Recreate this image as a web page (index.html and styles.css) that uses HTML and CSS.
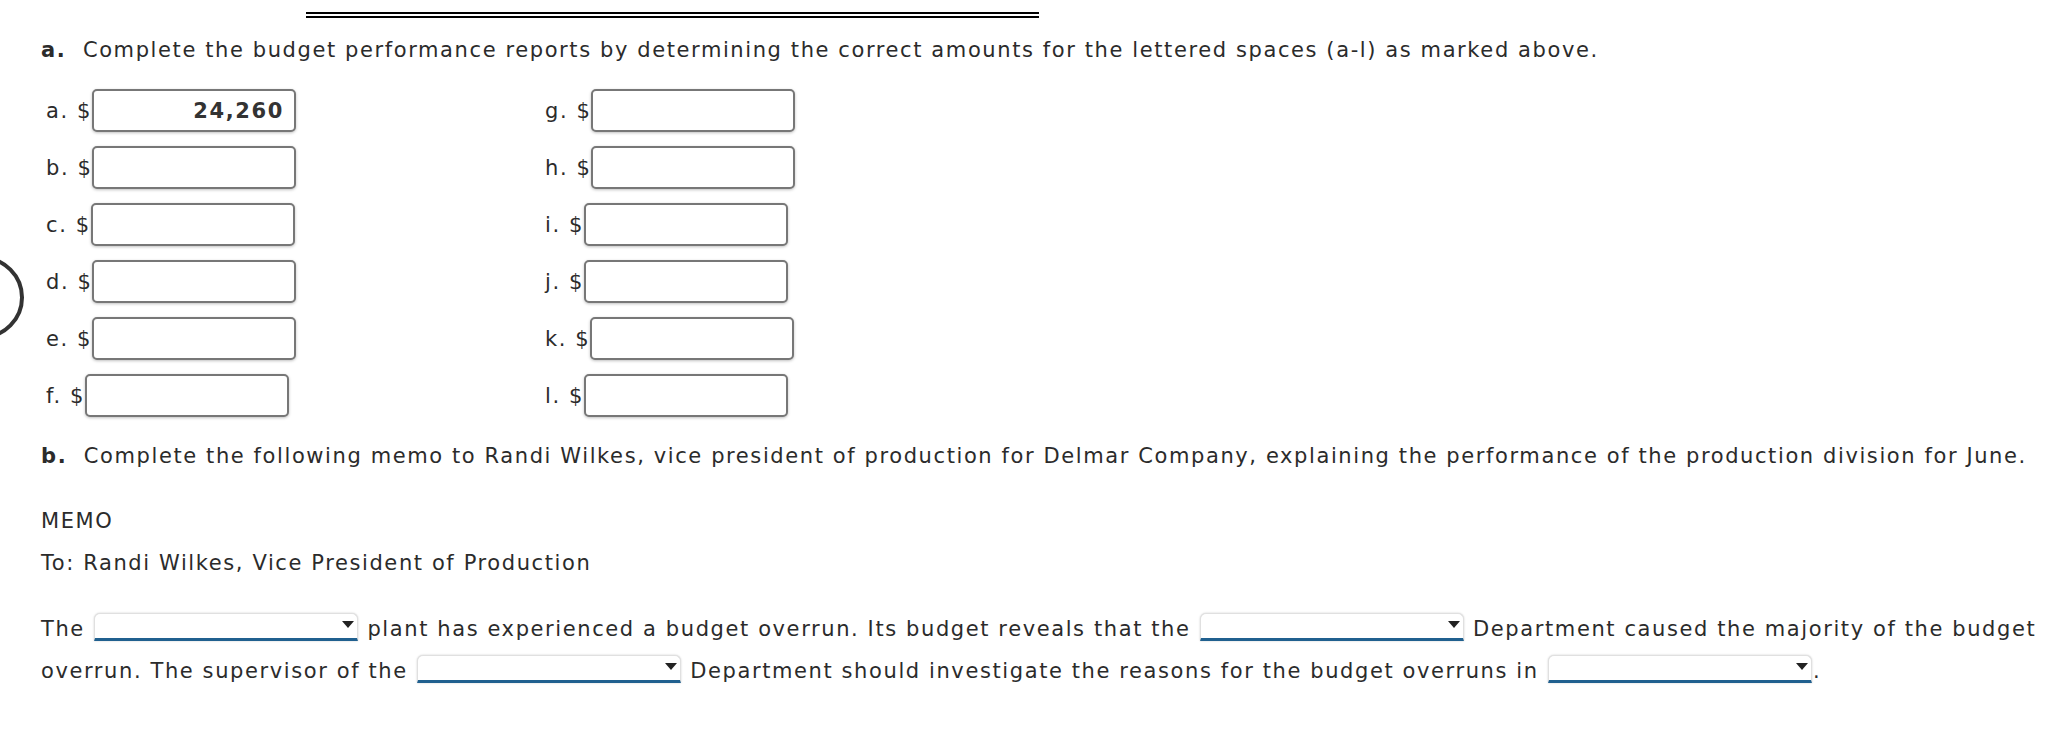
FILE: index.html
```html
<!DOCTYPE html>
<html>
<head>
    <meta charset="utf-8">
    <title>Budget performance reports</title>
    <link rel="stylesheet" href="styles.css">
</head>
<body>
    <div class="page">
        <div class="rule"></div>

        <p class="instr"><b>a.</b>&nbsp; Complete the budget performance reports by determining the correct amounts for the lettered spaces (a-l) as marked above.</p>

        <div class="answers">
            <div class="col">
                <div class="row"><span class="lbl">a. $</span><input class="amt" type="text" value="24,260"></div>
                <div class="row"><span class="lbl">b. $</span><input class="amt" type="text"></div>
                <div class="row"><span class="lbl">c. $</span><input class="amt" type="text"></div>
                <div class="row"><span class="lbl">d. $</span><input class="amt" type="text"></div>
                <div class="row"><span class="lbl">e. $</span><input class="amt" type="text"></div>
                <div class="row"><span class="lbl">f. $</span><input class="amt" type="text"></div>
            </div>
            <div class="col">
                <div class="row"><span class="lbl">g. $</span><input class="amt" type="text"></div>
                <div class="row"><span class="lbl">h. $</span><input class="amt" type="text"></div>
                <div class="row"><span class="lbl">i. $</span><input class="amt" type="text"></div>
                <div class="row"><span class="lbl">j. $</span><input class="amt" type="text"></div>
                <div class="row"><span class="lbl">k. $</span><input class="amt" type="text"></div>
                <div class="row"><span class="lbl">l. $</span><input class="amt" type="text"></div>
            </div>
        </div>

        <p class="instr part-b"><b>b.</b>&nbsp; Complete the following memo to Randi Wilkes, vice president of production for Delmar Company, explaining the performance of the production division for June.</p>

        <p class="memo-head">MEMO</p>
        <p class="memo-to">To: Randi Wilkes, Vice President of Production</p>

        <p class="memo">The <span class="dd"></span> plant has experienced a budget overrun. Its budget reveals that the <span class="dd"></span> Department caused the majority of the budget overrun. The supervisor of the <span class="dd"></span> Department should investigate the reasons for the budget overruns in <span class="dd"></span>.</p>
    </div>

    <div class="ring"></div>
</body>
</html>
```

FILE: styles.css
```css
body {
    margin: 0;
    padding: 0;
    background: #fff;
    color: #2b2b2b;
    font-family: "DejaVu Sans", Verdana, sans-serif;
    font-size: 21px;
    line-height: 28px;
    letter-spacing: 1.6px;
    overflow: hidden;
}

.page {
    padding: 12px 0 0 41px;
}

.rule {
    margin-left: 265px;
    width: 733px;
    height: 2px;
    border-top: 2px solid #000;
    border-bottom: 2px solid #000;
}

p {
    margin: 0;
}

.instr {
    margin-top: 18px;
}

.instr b {
    font-weight: bold;
}

.answers {
    display: grid;
    grid-template-columns: 499px auto;
    margin-top: 25px;
    padding-left: 5px;
}

.col {
    display: flex;
    flex-direction: column;
    gap: 14px;
}

.row {
    display: flex;
    align-items: center;
}

.lbl {
    white-space: nowrap;
}

.amt {
    width: 204px;
    height: 43px;
    box-sizing: border-box;
    border: 2px solid #777;
    border-radius: 5px;
    box-shadow: 0 1px 3px rgba(0, 0, 0, 0.25);
    padding: 0 10px;
    font-family: "DejaVu Sans", Verdana, sans-serif;
    font-size: 21px;
    font-weight: bold;
    letter-spacing: 1.6px;
    color: #333;
    text-align: right;
    background: #fff;
}

.part-b {
    margin-top: 25px;
}

.memo-head {
    margin-top: 37px;
}

.memo-to {
    margin-top: 14px;
}

.memo {
    margin-top: 31px;
    line-height: 42px;
}

.dd {
    display: inline-block;
    position: relative;
    width: 264px;
    height: 28px;
    box-sizing: border-box;
    margin: 0 1px;
    vertical-align: -5px;
    background: #fff;
    border: 1px solid #e0e0e0;
    border-bottom: 3px solid #20608f;
    border-radius: 6px 6px 0 0;
    box-shadow: 0 0 2px rgba(0, 0, 0, 0.22);
}

.dd::after {
    content: "";
    position: absolute;
    right: 3px;
    top: 7px;
    border-left: 6px solid transparent;
    border-right: 6px solid transparent;
    border-top: 7px solid #222;
}

.ring {
    position: absolute;
    left: -59px;
    top: 256px;
    width: 75px;
    height: 75px;
    border: 4px solid #333;
    border-radius: 50%;
}
```
